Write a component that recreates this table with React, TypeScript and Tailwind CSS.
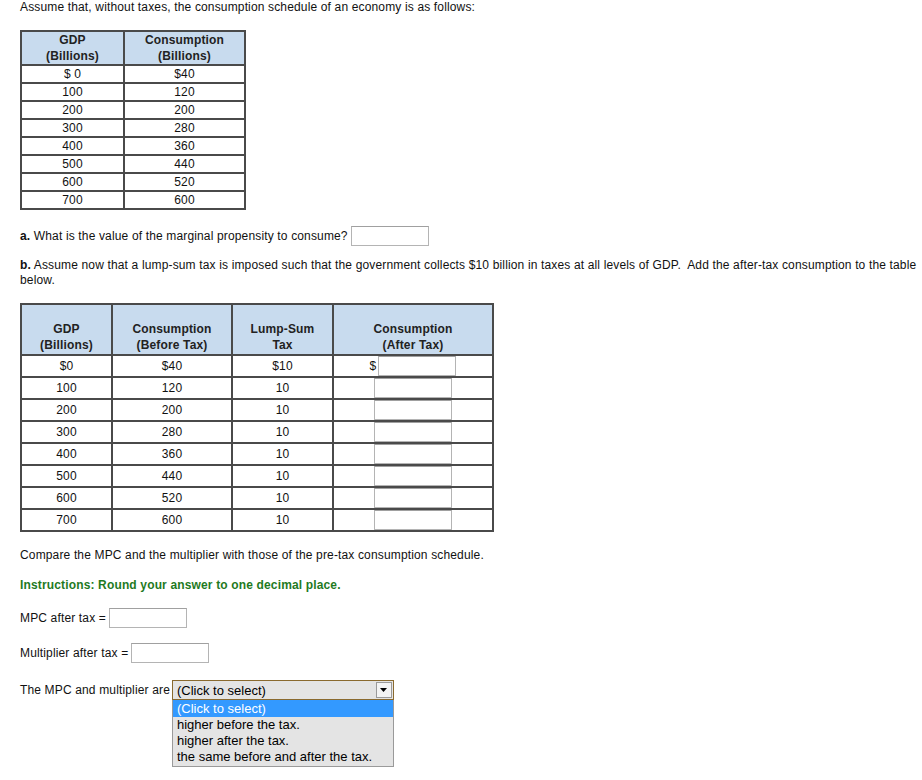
import React from "react";

const before = [
  ["$ 0", "$40"],
  ["100", "120"],
  ["200", "200"],
  ["300", "280"],
  ["400", "360"],
  ["500", "440"],
  ["600", "520"],
  ["700", "600"],
];

const lumpRows = [
  ["$0", "$40", "$10"],
  ["100", "120", "10"],
  ["200", "200", "10"],
  ["300", "280", "10"],
  ["400", "360", "10"],
  ["500", "440", "10"],
  ["600", "520", "10"],
  ["700", "600", "10"],
];

function Box({ className = "" }: { className?: string }) {
  return (
    <input
      type="text"
      className={
        "h-[20px] w-[78px] border border-[#b4b4b4] border-t-[#a0a0a0] bg-white px-1 text-[12px] outline-none " +
        className
      }
    />
  );
}

export default function App() {
  return (
    <main className="h-[780px] w-[922px] bg-white pl-5 font-['Liberation_Sans',Arial,sans-serif] text-[12px] leading-[15px] text-[#111] tracking-[0.15px]">
      <p>Assume that, without taxes, the consumption schedule of an economy is as follows:</p>

      <table className="mt-[15px] w-[226px] border-collapse border-2 border-[#4a4a4a] text-center">
        <thead>
          <tr className="h-[34px] bg-[#c8dbee]">
            <th className="w-[103px] border-2 border-[#4a4a4a] pb-0 align-bottom font-bold leading-[16px] text-[#222]">
              GDP
              <br />
              (Billions)
            </th>
            <th className="border-2 border-[#4a4a4a] align-bottom font-bold leading-[16px] text-[#222]">
              Consumption
              <br />
              (Billions)
            </th>
          </tr>
        </thead>
        <tbody>
          {before.map((r) => (
            <tr key={r[0]} className="h-[18px]">
              <td className="border-2 border-[#4a4a4a] p-0 leading-[14px]">{r[0]}</td>
              <td className="border-2 border-[#4a4a4a] p-0 leading-[14px]">{r[1]}</td>
            </tr>
          ))}
        </tbody>
      </table>

      <div className="mt-[16px] flex h-[20px] items-center">
        <span>
          <b>a.</b> What is the value of the marginal propensity to consume?
        </span>
        <Box className="ml-[3px]" />
      </div>

      <p className="mt-[12px] w-[900px]">
        <b>b.</b> Assume now that a lump-sum tax is imposed such that the government collects $10 billion in taxes at
        all levels of GDP.&nbsp; Add the after-tax consumption to the table below.
      </p>

      <table className="mt-[15px] w-[474px] border-collapse border-2 border-[#4a4a4a] text-center">
        <thead>
          <tr className="h-[51px] bg-[#c8dbee]">
            <th className="w-[91px] border-2 border-[#4a4a4a] pb-[1px] align-bottom font-bold leading-[16px] text-[#222]">
              GDP
              <br />
              (Billions)
            </th>
            <th className="w-[120px] border-2 border-[#4a4a4a] pb-[1px] align-bottom font-bold leading-[16px] text-[#222]">
              Consumption
              <br />
              (Before Tax)
            </th>
            <th className="w-[101px] border-2 border-[#4a4a4a] pb-[1px] align-bottom font-bold leading-[16px] text-[#222]">
              Lump-Sum
              <br />
              Tax
            </th>
            <th className="border-2 border-[#4a4a4a] pb-[1px] align-bottom font-bold leading-[16px] text-[#222]">
              Consumption
              <br />
              (After Tax)
            </th>
          </tr>
        </thead>
        <tbody>
          {lumpRows.map((r, i) => (
            <tr key={r[0]} className="h-[22px]">
              <td className="border-2 border-[#4a4a4a] p-0">{r[0]}</td>
              <td className="border-2 border-[#4a4a4a] p-0">{r[1]}</td>
              <td className="border-2 border-[#4a4a4a] p-0">{r[2]}</td>
              <td className="border-2 border-[#4a4a4a] p-0">
                <div className="flex items-center justify-center">
                  {i === 0 ? <span className="mr-[2px]">$</span> : null}
                  <Box className="w-[77px]" />
                </div>
              </td>
            </tr>
          ))}
        </tbody>
      </table>

      <p className="mt-[16px]">Compare the MPC and the multiplier with those of the pre-tax consumption schedule.</p>

      <p className="mt-[15px] font-bold text-[#1f7a1f]">Instructions: Round your answer to one decimal place.</p>

      <div className="mt-[15px] flex h-[20px] items-center">
        <span>MPC after tax =</span>
        <Box className="ml-[3px]" />
      </div>

      <div className="mt-[15px] flex h-[20px] items-center">
        <span>Multiplier after tax =</span>
        <Box className="ml-[3px]" />
      </div>

      <div className="mt-[17px] flex h-[20px] items-center">
        <span className="mr-[2px]">The MPC and multiplier are</span>
        <div className="relative h-[20px] w-[222px] tracking-normal">
          <div className="flex h-full items-center border border-[#8a6a2f] bg-[#e4e4e4] pl-[4px] text-[13px] text-black">
            <span className="flex-1">(Click to select)</span>
            <span className="mr-[1px] flex h-[16px] w-[16px] items-center justify-center border border-[#9a9a9a] bg-[#f4f4f4]">
              <svg width="7" height="4" viewBox="0 0 7 4">
                <path d="M0 0h7L3.5 4z" fill="#000" />
              </svg>
            </span>
          </div>
          <ul className="absolute left-0 top-[20px] w-[222px] border border-[#9a9a9a] border-t-0 bg-[#e4e4e4] pb-[1px] text-[13px] leading-[16px] text-black">
            <li className="bg-[#3399ff] pl-[4px] pt-[1px] text-white">(Click to select)</li>
            <li className="pl-[4px]">higher before the tax.</li>
            <li className="pl-[4px]">higher after the tax.</li>
            <li className="pl-[4px]">the same before and after the tax.</li>
          </ul>
        </div>
      </div>
    </main>
  );
}
